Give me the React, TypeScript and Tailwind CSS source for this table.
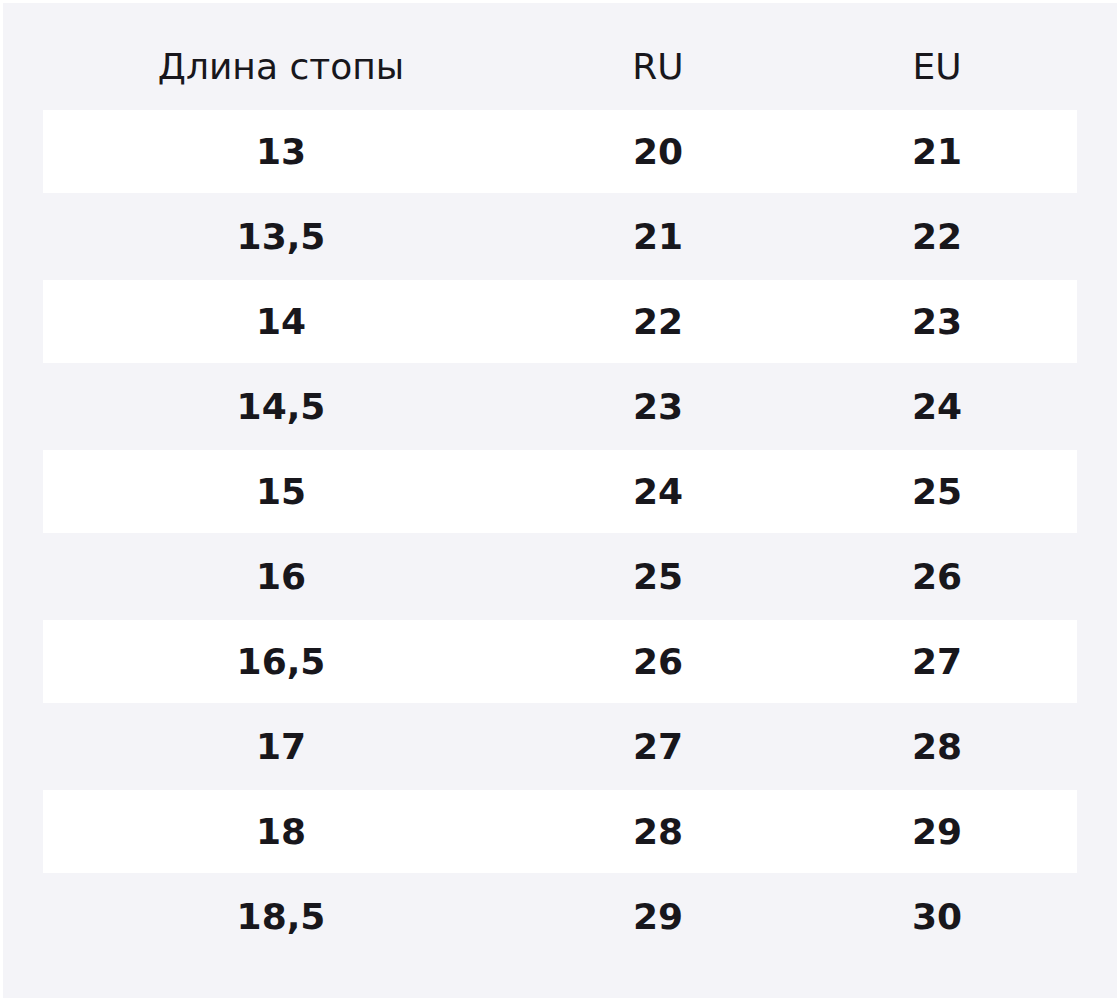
import React from "react";

const ROWS: [string, string, string][] = [
  ["13", "20", "21"],
  ["13,5", "21", "22"],
  ["14", "22", "23"],
  ["14,5", "23", "24"],
  ["15", "24", "25"],
  ["16", "25", "26"],
  ["16,5", "26", "27"],
  ["17", "27", "28"],
  ["18", "28", "29"],
  ["18,5", "29", "30"],
];

const COLS = "grid grid-cols-[476px_278px_280px] items-center text-center";

export default function App() {
  return (
    <div className="bg-white p-[3px] w-[1120px] h-[1003px]">
      <div
        className="bg-[#f4f4f8] w-[1114px] h-[995px] pt-[20px] px-[40px] pb-[38px] text-[#18171c] text-[36px] leading-none"
        style={{ fontFamily: '"DejaVu Sans", sans-serif' }}
      >
        <div className={`${COLS} h-[87px]`}>
          <div>Длина стопы</div>
          <div>RU</div>
          <div>EU</div>
        </div>
        {ROWS.map((row, i) => (
          <div
            key={row[0]}
            className={`${COLS} font-bold ${i % 2 === 0 ? "bg-white h-[83px]" : "h-[87px]"}`}
          >
            {row.map((cell, j) => (
              <div key={j}>{cell}</div>
            ))}
          </div>
        ))}
      </div>
    </div>
  );
}
